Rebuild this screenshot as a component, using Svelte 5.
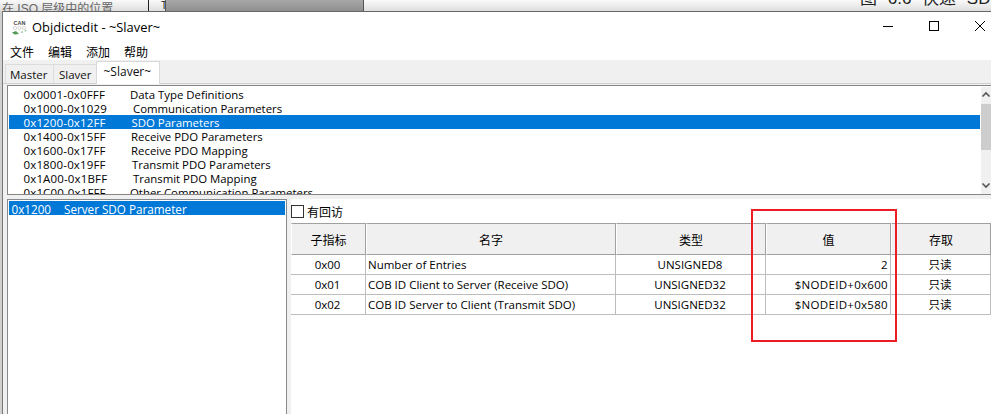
<script>
  const ranges = [
    { id: '0x0001-0x0FFF', name: 'Data Type Definitions', x: 130 },
    { id: '0x1000-0x1029', name: 'Communication Parameters', x: 133 },
    { id: '0x1200-0x12FF', name: 'SDO Parameters', x: 131.5, sel: true },
    { id: '0x1400-0x15FF', name: 'Receive PDO Parameters', x: 131 },
    { id: '0x1600-0x17FF', name: 'Receive PDO Mapping', x: 131 },
    { id: '0x1800-0x19FF', name: 'Transmit PDO Parameters', x: 132 },
    { id: '0x1A00-0x1BFF', name: 'Transmit PDO Mapping', x: 133 },
    { id: '0x1C00-0x1FFF', name: 'Other Communication Parameters', x: 130 }
  ];
  const rows = [
    ['0x00', 'Number of Entries', 'UNSIGNED8', '2', '只读'],
    ['0x01', 'COB ID Client to Server (Receive SDO)', 'UNSIGNED32', '$NODEID+0x600', '只读'],
    ['0x02', 'COB ID Server to Client (Transmit SDO)', 'UNSIGNED32', '$NODEID+0x580', '只读']
  ];
  const heads = ['子指标', '名字', '类型', '值', '存取'];
</script>

<div class="desktop">
  <div class="strip">
    <span class="doc-left">在 ISO 层级中的位置</span>
    <span class="rule"></span>
    <span class="tee">T</span>
    <span class="shade"></span>
    <span class="doc-right">图 6.6 快速 SDO</span>
  </div>

  <div class="window">
    <div class="titlebar">
      <svg class="appicon" width="17" height="17" viewBox="0 0 17 17">
        <text x="8.5" y="5.5" text-anchor="middle" font-size="5.5" font-weight="700" fill="#444" font-family="Liberation Sans, sans-serif">CAN</text>
        <g fill="none" stroke="#c9c9c9" stroke-width="0.8">
          <circle cx="4" cy="9" r="1.6" /><circle cx="8.5" cy="9" r="1.6" /><circle cx="13" cy="9" r="1.6" />
        </g>
        <path d="M1 13.5 L5 12 L8 15 L3.5 15.5 Z" fill="#4f9a55" />
        <path d="M9.5 13 L12 12.2 L11.5 14 Z M13 12 L15.5 11 L15 12.5 Z" fill="#6aaf6e" />
      </svg>
      <span class="title">Objdictedit - ~Slaver~</span>
      <div class="controls">
        <svg width="12" height="12" viewBox="0 0 12 12"><path d="M1 6.5H11" stroke="#000" fill="none" /></svg>
        <svg width="12" height="12" viewBox="0 0 12 12"><rect x="1.5" y="1.5" width="9" height="9" stroke="#000" fill="none" /></svg>
        <svg width="12" height="12" viewBox="0 0 12 12"><path d="M1 1L11 11M11 1L1 11" stroke="#000" fill="none" /></svg>
      </div>
    </div>

    <div class="menubar">
      <span>文件</span><span>编辑</span><span>添加</span><span>帮助</span>
    </div>

    <div class="tabs">
      <span class="tab t1">Master</span>
      <span class="tab t2">Slaver</span>
      <span class="tab active">~Slaver~</span>
    </div>

    <div class="body">
      <div class="upper">
        <div class="ranges">
          {#each ranges as r}
            <div class="range" class:selected={r.sel}>
              <span class="rid">{r.id}</span>
              <span class="rname" style="left:{r.x - 9}px">{r.name}</span>
            </div>
          {/each}
        </div>
        <div class="scrollbar">
          <svg class="arrow" width="10" height="10" viewBox="0 0 10 10"><path d="M1.5 6.5L5 3L8.5 6.5" fill="none" stroke="#555" stroke-width="1.6" /></svg>
          <div class="track"><div class="thumb"></div></div>
          <svg class="arrow" width="10" height="10" viewBox="0 0 10 10"><path d="M1.5 3.5L5 7L8.5 3.5" fill="none" stroke="#555" stroke-width="1.6" /></svg>
        </div>
      </div>

      <div class="lower">
        <div class="indexlist">
          <div class="indexitem"><span class="iid">0x1200</span><span>Server SDO Parameter</span></div>
        </div>
        <div class="detail">
          <label class="check"><span class="box"></span><span class="checktext">有回访</span></label>
          <div class="grid">
            {#each heads as h}
              <div class="head">{h}</div>
            {/each}
            {#each rows as row}
              <div class="cell center">{row[0]}</div>
              <div class="cell">{row[1]}</div>
              <div class="cell center">{row[2]}</div>
              <div class="cell right">{row[3]}</div>
              <div class="cell center">{row[4]}</div>
            {/each}
          </div>
        </div>
      </div>
    </div>
  </div>

  <div class="redbox"></div>
</div>

<style>
  :global(body) { margin: 0; background: #fff; }
  .desktop {
    position: relative;
    width: 991px;
    height: 414px;
    overflow: hidden;
    font-family: "Open Sans", "Noto Sans CJK SC", sans-serif;
    font-size: 11.5px;
    color: #000;
    background: #d0d0d0;
  }
  .strip {
    position: relative;
    height: 11px;
    overflow: hidden;
    background: linear-gradient(#fafafa, #dedede);
  }
  .doc-left {
    position: absolute;
    left: 2px;
    top: 0;
    font-size: 12px;
    line-height: 18px;
    color: #666;
    font-family: "Liberation Sans", "Noto Sans CJK SC", sans-serif;
    white-space: nowrap;
  }
  .rule { position: absolute; left: 148px; top: 0; width: 1px; height: 11px; background: #222; }
  .tee { position: absolute; left: 161px; top: -1px; font-size: 10px; line-height: 14px; color: #222; font-family: "Liberation Sans", sans-serif; }
  .shade {
    position: absolute;
    left: 165px;
    top: 0;
    width: 199px;
    height: 11px;
    background: linear-gradient(#a8a8a8, #8f8f8f);
    border-left: 1px solid #555;
    border-right: 1px solid #555;
    box-sizing: border-box;
  }
  .doc-right {
    position: absolute;
    left: 860px;
    top: -11px;
    font-size: 17px;
    line-height: 20px;
    font-family: "Liberation Sans", "Noto Sans CJK SC", sans-serif;
    color: #222;
    white-space: nowrap;
    word-spacing: 6px;
  }
  .window {
    margin-left: 2px;
    height: 403px;
    box-sizing: border-box;
    border-left: 1px solid #777;
    border-top: 1px solid #666;
    background: #f0f0f0;
    display: flex;
    flex-direction: column;
  }
  .titlebar {
    height: 30px;
    flex: none;
    background: #fff;
    display: flex;
    align-items: center;
    padding-left: 8px;
    box-sizing: border-box;
  }
  .appicon { margin-right: 4px; flex: none; }
  .title { font-size: 12.9px; color: #000; }
  .controls {
    margin-left: auto;
    display: flex;
    gap: 34px;
    padding-right: 5px;
    margin-top: -2px;
  }
  .menubar {
    height: 18px;
    flex: none;
    background: #fff;
    display: flex;
    gap: 14px;
    align-items: center;
    padding-left: 7px;
    font-size: 12px;
    font-family: "Noto Sans CJK SC", sans-serif;
    box-sizing: border-box;
  }
  .tabs {
    height: 24px;
    flex: none;
    display: flex;
    align-items: flex-end;
    padding-left: 2px;
    box-sizing: border-box;
    border-bottom: 1px solid #d0d0d0;
    background: #f0f0f0;
  }
  .tab {
    height: 19px;
    line-height: 20px;
    box-sizing: border-box;
    background: #f0f0f0;
    border: 1px solid #dcdcdc;
    border-bottom: none;
    border-right: none;
    padding-left: 5px;
    font-size: 11.5px;
    color: #111;
  }
  .t1 { width: 48px; padding-left: 4px; }
  .t2 { width: 43px; }
  .tab.active {
    width: 64px;
    height: 23px;
    margin-left: 0;
    background: #fff;
    border: 1px solid #d9d9d9;
    border-bottom: none;
    padding-left: 6.5px;
    line-height: 20px;
    font-size: 12px;
    margin-bottom: -1px;
    position: relative;
  }
  .body {
    flex: 1;
    min-height: 0;
    padding-left: 4px;
    padding-top: 1px;
    display: flex;
    flex-direction: column;
    gap: 4px;
  }
  .upper {
    height: 110px;
    flex: none;
    box-sizing: border-box;
    border-top: 1px solid #858585;
    border-left: 1px solid #858585;
    border-bottom: 1px solid #858585;
    background: #fff;
    display: flex;
    padding-top: 1px;
  }
  .ranges {
    flex: 1;
    height: 107px;
    overflow: hidden;
    padding-left: 1px;
    padding-right: 1px;
  }
  .range {
    position: relative;
    height: 14px;
    line-height: 16px;
    white-space: nowrap;
  }
  .range.selected { background: #0078d7; color: #fff; }
  .rid { position: absolute; left: 14.5px; top: 0; letter-spacing: 0.15px; }
  .rname { position: absolute; top: 0; font-size: 11.4px; }
  .scrollbar {
    width: 10px;
    flex: none;
    background: #f0f0f0;
    display: flex;
    flex-direction: column;
    height: 107px;
  }
  .arrow { flex: none; margin: 3px 0 4px; }
  .track { flex: 1; }
  .thumb { height: 46px; background: #cdcdcd; }
  .lower {
    flex: 1;
    min-height: 0;
    display: flex;
    gap: 4px;
  }
  .indexlist {
    width: 280px;
    flex: none;
    box-sizing: border-box;
    border: 1px solid #858a8f;
    border-bottom: none;
    background: #fff;
    padding: 1px;
  }
  .indexitem {
    height: 14px;
    line-height: 16px;
    background: #0078d7;
    color: #fff;
    display: flex;
    padding-left: 2.5px;
    white-space: nowrap;
    font-size: 11.7px;
  }
  .iid { width: 52.5px; flex: none; }
  .detail {
    flex: 1;
    background: #fff;
    min-width: 0;
  }
  .check {
    height: 24px;
    display: flex;
    align-items: center;
    gap: 3px;
    font-size: 12px;
    font-family: "Noto Sans CJK SC", sans-serif;
    box-sizing: border-box;
  }
  .checktext { line-height: 18px; padding-top: 1px; }
  .box {
    width: 13px;
    height: 13px;
    box-sizing: border-box;
    border: 1px solid #333;
    background: #fff;
  }
  .grid {
    display: grid;
    grid-template-columns: 75px 250px 150px 125px 100px;
    grid-auto-rows: 20px;
    grid-template-rows: 32px;
  }
  .head {
    background: #f0f0f0;
    border-top: 1px solid #a0a0a0;
    border-left: 1px solid #fff;
    border-right: 1px solid #a0a0a0;
    border-bottom: 1px solid #a0a0a0;
    box-sizing: border-box;
    display: flex;
    align-items: center;
    justify-content: center;
    font-size: 12px;
    font-family: "Noto Sans CJK SC", sans-serif;
  }
  .cell {
    box-sizing: border-box;
    border-right: 1px solid #bdbdbd;
    border-bottom: 1px solid #bdbdbd;
    line-height: 19px;
    padding: 0 2px;
    white-space: nowrap;
    overflow: hidden;
  }
  .center { text-align: center; padding-right: 3px; }
  .right { text-align: right; letter-spacing: 0.3px; }
  .redbox {
    position: absolute;
    left: 751px;
    top: 209px;
    width: 146px;
    height: 133px;
    box-sizing: border-box;
    border: 2px solid #ed1c24;
  }
</style>
